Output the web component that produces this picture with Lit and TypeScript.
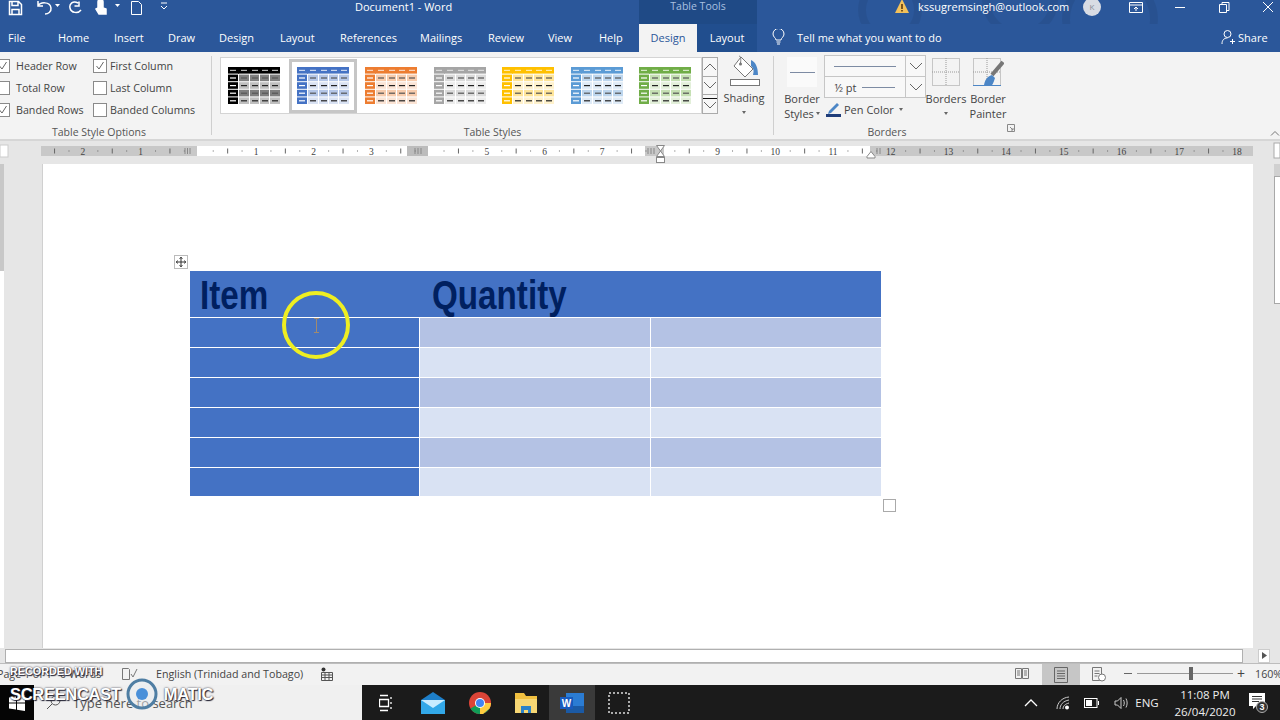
import { LitElement, html, css, svg, unsafeCSS } from "lit";
import { customElement } from "lit/decorators.js";

const FONT = unsafeCSS(`"Open Sans", "Noto Sans", sans-serif`);

const TABS: [string, number][] = [
  ["File", 8], ["Home", 58], ["Insert", 114], ["Draw", 168], ["Design", 219], ["Layout", 280],
  ["References", 340], ["Mailings", 420], ["Review", 488], ["View", 548], ["Help", 599],
];
const TABS_END = 639;

const STYLES = [
  ["#000000", "#7f7f7f", "#bfbfbf", "#b0b0b0"],
  ["#4472c4", "#b4c6e7", "#d9e2f3", "#c9d6ef"],
  ["#ed7d31", "#f7cbac", "#fbe4d5", "#f8d3ba"],
  ["#a5a5a5", "#dbdbdb", "#ededed", "#d8d8d8"],
  ["#ffc000", "#ffe599", "#fff2cc", "#ffe9a8"],
  ["#5b9bd5", "#bdd6ee", "#deeaf6", "#cfe2f3"],
  ["#70ad47", "#c5e0b3", "#e2efd9", "#d4e8c6"],
];

function thumb(c: string[]) {
  const rows = [0, 1, 2, 3, 4];
  const cols = [0, 1, 2, 3, 4];
  const xs = [0, 11, 22, 32, 42];
  const ws = [10, 10, 9, 9, 10];
  return html`<svg class="thumb" width="52" height="38" viewBox="0 0 52 38">
    ${rows.map((r) =>
      cols.map((k) => {
        const y = r * 7.6;
        const isHead = r === 0;
        const isFirst = k === 0;
        const fill = isHead || isFirst ? c[0] : r % 2 === 1 ? c[1] : c[2];
        const dash = isHead ? c[3] : isFirst ? "#ffffff" : r % 2 === 1 ? "#555" : "#222";
        return svg`<rect x=${isHead ? (k === 0 ? 0 : xs[k] - 1) : xs[k]} y=${y} width=${isHead ? ws[k] + 1 : ws[k]} height="6.6" fill=${fill}></rect>
          <rect x=${xs[k] + 2} y=${y + 2.8} width="6" height="1.2" fill=${dash}></rect>`;
      })
    )}
  </svg>`;
}

function ruler() {
  const zero = 198.3;
  const step = 57.7;
  const marks = [];
  for (let i = -3; i <= 18; i++) {
    const x = zero + step * i;
    if (i !== 0 && i !== 4 && i !== 8 && i >= -2) {
      marks.push(svg`<text x=${x} y="154.5" text-anchor="middle" font-size="9.5" fill="#444">${Math.abs(i)}</text>`);
    }
    for (const [f, h] of [[0.25, 1], [0.5, 5], [0.75, 1]] as [number, number][]) {
      const tx = x + step * f;
      if (tx > 42 && tx < 1250) {
        marks.push(svg`<rect x=${tx} y=${151 - h / 2} width="1" height=${h} fill="#666"></rect>`);
      }
    }
  }
  return html`<svg class="ruler" width="1280" height="23" viewBox="0 141 1280 23">
    <rect x="0" y="145" width="8" height="12" fill="#fff" stroke="#ccc"></rect>
    <rect x="1274" y="143" width="6" height="15" fill="#fff" stroke="#aaa"></rect>
    <rect x="41" y="146" width="1212" height="10" fill="#c8c8c8"></rect>
    <rect x="197" y="146" width="210" height="10" fill="#fff"></rect>
    <rect x="428" y="146" width="217" height="10" fill="#fff"></rect>
    <rect x="664" y="146" width="206" height="10" fill="#fff"></rect>
    <rect x="407" y="146" width="21" height="10" fill="#bcbcbc"></rect>
    <rect x="645" y="146" width="19" height="10" fill="#c8c8c8"></rect>
    ${marks}
    <g stroke="#888" stroke-width="1" fill="none">
      <path d="M185 148v6M187.500 148v6M190 148v6M415 148v6M418 148v6M421 148v6M648 148v6M651 148v6M654 148v6"></path>
      <path d="M656.500 145.500h8l-4 5.500 4 5.500h-8l4-5.500z" fill="#fff"></path>
      <rect x="656.500" y="157.500" width="8" height="5" fill="#fff"></rect>
      <path d="M867 156.500l4-5 4 5v1.500h-8z" fill="#fff"></path>
      <path d="M877 148v6M880 148v6"></path>
    </g>
  </svg>`;
}

@customElement("app-root")
export class AppRoot extends LitElement {
  static styles = css`
    :host { display: block; width: 1280px; height: 720px; overflow: hidden; font-family: ${FONT}; }
    svg { display: block; flex: none; }
    .app { position: relative; width: 1280px; height: 720px; display: flex; flex-direction: column; overflow: hidden; background: #e6e6e6; }

    .title { position: relative; height: 24px; padding-bottom: 12px; box-sizing: border-box; background: #2b579a; color: #fff; display: flex; align-items: center; font-size: 11px; flex: none; }
    .art { position: absolute; left: 820px; top: 0; }
    .qat { width: 355px; align-self: flex-start; margin-top: -2px; flex: none; }
    .doc-name { width: 284px; flex: none; }
    .ctx { width: 118px; height: 24px; margin-bottom: -12px; padding-bottom: 12px; box-sizing: border-box; background: #1f4a86; color: #a9c0e0; display: flex; align-items: center; justify-content: center; flex: none; font-size: 10.500px; }
    .account { margin-left: 144px; display: flex; align-items: center; flex: none; position: relative; }
    .warn { margin-left: -7px; }
    .email { margin-left: 8px; width: 152px; white-space: nowrap; font-size: 11px; }
    .avatar { width: 18px; height: 18px; border-radius: 50%; background: #d8dce4; color: #8a8f98; font-size: 8px; display: flex; align-items: center; justify-content: center; margin-left: 13px; margin-top: 1px; flex: none; }
    .winbtns { align-self: flex-start; flex: none; }

    .tabs { height: 28px; background: #2b579a; color: #fff; display: flex; font-size: 11px; flex: none; position: relative; }
    .tabs-left { width: 639px; box-sizing: border-box; padding: 0 0 2px 8px; display: flex; align-items: center; flex: none; }
    .tab { white-space: nowrap; flex: none; }
    .tab-active { width: 58px; padding-bottom: 2px; box-sizing: border-box; background: #f3f3f3; color: #2b579a; display: flex; align-items: center; justify-content: center; flex: none; }
    .tab-ctx { width: 60px; padding-bottom: 2px; box-sizing: border-box; background: #214e8e; display: flex; align-items: center; justify-content: center; flex: none; }
    .tell { display: flex; align-items: center; margin-left: 15px; padding-bottom: 2px; width: 449px; flex: none; }
    .tell span { margin-left: 12px; white-space: nowrap; }
    .share { display: flex; align-items: center; gap: 3px; padding-bottom: 2px; }

    .ribbon { position: relative; height: 87px; background: #f3f3f3; display: flex; flex: none; color: #444; font-size: 11px; border-bottom: 2px solid #d6d6d6; }
    .group { display: flex; flex-direction: column; flex: none; border-right: 1px solid #cfcfcf; margin-top: 4px; height: 79px; }
    .group-body { height: 71px; margin-top: -1px; display: flex; flex: none; }
    .group-label { text-align: center; font-size: 10.500px; line-height: 14px; color: #555; margin-top: -1px; }
    .g-opts { width: 211px; }
    .g-opts .group-label { width: 198px; }
    .checks { display: grid; grid-template-columns: 93px 110px; grid-auto-rows: 22px; }
    .check { display: flex; align-items: center; gap: 3px; white-space: nowrap; font-size: 10.700px; }
    .check:nth-child(odd) { margin-left: -4px; gap: 6px; }
    .box { width: 12px; height: 12px; border: 1px solid #8a8a8a; background: #fff; flex: none; display: flex; align-items: center; justify-content: center; }

    .g-styles { width: 561px; }
    .g-styles .group-body { padding-left: 8px; }
    .gallery { width: 482px; height: 57px; margin-top: 2px; background: #fff; border: 1px solid #d4d4d4; display: flex; align-items: center; padding-left: 7px; gap: 16.500px; flex: none; box-sizing: border-box; }
    .gal-item { display: flex; align-items: center; justify-content: center; flex: none; width: 52px; height: 38px; }
    .gal-sel { outline: 3px solid #c6c6c6; outline-offset: 5px; }
    .scroller { width: 16px; height: 57px; margin-top: 2px; display: flex; flex-direction: column; border: 1px solid #aaa; box-sizing: border-box; background: #f7f7f7; flex: none; }
    .scroller div { flex: 1; display: flex; align-items: center; justify-content: center; border-bottom: 1px solid #aaa; }
    .scroller .more { border-bottom: 0; flex-direction: column; }
    .big { display: flex; flex-direction: column; align-items: center; flex: none; font-size: 11px; line-height: 15px; text-align: center; }
    .shading { width: 46px; margin-left: 3px; }
    .big .cap { margin-top: 3px; }
    .big .cap-b { margin-top: 4px; }
    .caret { width: 0; height: 0; border-left: 2.500px solid transparent; border-right: 2.500px solid transparent; border-top: 3px solid #666; display: inline-block; vertical-align: middle; margin-left: 2px; }
    .caret.solo { margin-left: 0; }
    .caret-line { height: 15px; display: flex; align-items: center; justify-content: center; }

    .g-borders { width: 238px; border-right: 0; position: relative; }
    .g-borders .group-label { width: 226px; }
    .g-borders .group-body { padding-left: 9px; }
    .bstyle { width: 38px; }
    .bstyle-box { width: 30px; height: 30px; background: #fafafa; display: flex; align-items: center; justify-content: center; margin-top: 2px; }
    .bstyle-box i { display: block; width: 25px; height: 1px; background: #7d8ba3; }
    .lines { width: 102px; margin-left: 3px; flex: none; }
    .ldrop { display: flex; flex-direction: column; border: 1px solid #c6c6c6; background: #f8f8f8; height: 43px; box-sizing: border-box; }
    .lrow { flex: 1; display: flex; align-items: center; }
    .lrow + .lrow { border-top: 1px solid #c6c6c6; }
    .lrow-main { flex: none; width: 80px; display: flex; align-items: center; justify-content: center; gap: 6px; font-size: 11px; border-right: 1px solid #c6c6c6; height: 100%; }
    .lrow-main i { display: block; height: 1px; background: #7d8ba3; }
    .lrow-main .long { width: 62px; }
    .lrow-main .short { width: 33px; }
    .lrow-arrow { flex: 1; display: flex; align-items: center; justify-content: center; }
    .pen { display: flex; align-items: center; margin-top: 2px; margin-left: 2px; gap: 3px; font-size: 11px; }
    .bbtn { width: 40px; padding-top: 2px; }
    .bbtn + .bbtn { margin-left: 2px; }
    .launcher { position: absolute; right: -3px; bottom: 3px; }
    .collapse { position: absolute; left: 1270px; top: 78px; }

    .ruler-row { height: 23px; flex: none; background: #e6e6e6; }
    .ruler text { font-family: "Liberation Serif", serif; }

    .doc { height: 484px; display: flex; flex: none; background: #e6e6e6; }
    .vruler { width: 4px; flex: none; background: linear-gradient(#c8c8c8 0, #c8c8c8 107px, #fff 107px); }
    .gutter-l { width: 38px; flex: none; border-right: 1px solid #d0d0d0; }
    .page { width: 1210px; flex: none; background: #fff; padding: 107px 0 0 147px; box-sizing: border-box; position: relative; }
    .gutter-r { width: 21px; flex: none; }
    .vscroll { width: 6px; flex: none; display: flex; flex-direction: column; }
    .vscroll-top { height: 12px; background: #d0d0d0; flex: none; }
    .vscroll-thumb { height: 128px; background: #fff; border: 1px solid #a8a8a8; border-right: 0; box-sizing: border-box; flex: none; }

    .tbl-wrap { position: relative; width: 691px; }
    .tbl { display: grid; grid-template-columns: 229px 230px 230px; grid-template-rows: 46px repeat(5, 29px) 28px; gap: 1px; background: #fff; }
    .th { grid-column: 1 / 4; background: #4472c4; position: relative; display: grid; grid-template-columns: 230px 1fr; align-items: center; }
    .th span { font-family: "Liberation Sans", Arial, sans-serif; font-weight: 700; font-size: 40px; color: #002060; display: block; transform: scaleX(0.83); transform-origin: left center; white-space: nowrap; line-height: 48px; }
    .th span:first-child { margin-left: 10px; }
    .th span:last-child { margin-left: 12px; }
    .c0 { background: #4472c4; }
    .c1 { background: #b4c2e4; }
    .c2 { background: #d9e2f3; }
    .move { position: absolute; left: -16px; top: -16px; width: 14px; height: 14px; border: 1px solid #bbb; background: #fff; box-sizing: border-box; display: flex; align-items: center; justify-content: center; }
    .resize { position: absolute; left: 693px; top: 228px; width: 13px; height: 13px; border: 1px solid #aaa; background: #fff; box-sizing: border-box; }
    .cursor-ring { position: absolute; left: 92px; top: 20px; width: 68px; height: 68px; border: 4px solid #eeee22; border-radius: 50%; box-sizing: border-box; display: flex; align-items: center; justify-content: center; }

    .hscroll { height: 15px; flex: none; display: flex; align-items: center; background: #e6e6e6; }
    .hthumb { width: 1238px; height: 14px; margin-left: 5px; background: #fff; border: 1px solid #b0b0b0; box-sizing: border-box; flex: none; }
    .hbtn { width: 12px; height: 14px; margin-left: 15px; background: #fff; border: 1px solid #ccc; box-sizing: border-box; display: flex; align-items: center; justify-content: center; flex: none; }

    .status { height: 22px; padding-bottom: 2px; flex: none; background: #f2f2f2; border-top: 1px solid #bdbdbd; box-sizing: border-box; display: flex; align-items: center; font-size: 10.700px; color: #444; position: relative; }
    .st-words { width: 125px; margin-left: -3px; white-space: nowrap; flex: none; }
    .st-lang { margin-left: 18px; width: 150px; white-space: nowrap; flex: none; }
    .st-macro { margin-left: 14px; }
    .st-read { margin-left: 681px; }
    .st-view { width: 38px; height: 21px; margin-bottom: -2px; display: flex; align-items: center; justify-content: center; flex: none; }
    .st-view.on { background: #c6c6c6; margin-left: 13px; }
    .minus { margin-left: 6px; width: 8px; height: 1px; background: #666; flex: none; }
    .slider { width: 96px; height: 1px; background: #999; position: relative; margin: 0 4px 0 5px; flex: none; }
    .slider b { position: absolute; left: 52px; top: -6px; width: 4px; height: 13px; background: #666; }
    .plus { font-size: 14px; line-height: 14px; flex: none; }
    .zoom { margin-left: 10px; white-space: nowrap; flex: none; }

    .taskbar { height: 35px; flex: none; background: #1b1b1b; display: flex; align-items: center; color: #fff; }
    .start { width: 34px; height: 35px; background: #050505; display: flex; align-items: center; justify-content: center; flex: none; }
    .search { width: 328px; height: 35px; background: #f0f0f0; color: #555; display: flex; align-items: center; font-size: 13px; padding-left: 12px; box-sizing: border-box; gap: 12px; flex: none; white-space: nowrap; }
    .tb { height: 35px; width: 46px; display: flex; align-items: center; justify-content: center; flex: none; }
    .tb.w47 { width: 47px; }
    .tb.w48 { width: 48px; }
    .tb.on { background: #3a3a3a; }
    .tray { display: flex; align-items: center; font-size: 11.500px; color: #eee; margin-left: 381px; }
    .tray .wifi { margin-left: 18px; }
    .tray .batt { margin-left: 14px; }
    .tray .spk { margin-left: 15px; }
    .eng { margin-left: 3px; width: 30px; text-align: center; }
    .clock { width: 76px; margin-left: 5px; text-align: center; font-size: 11.500px; line-height: 17px; }
    .notif { margin-left: 6px; }

    .wm { position: absolute; left: 10px; top: 664px; color: #fff; font-family: "Liberation Sans", Arial, sans-serif; font-weight: 700; text-shadow: 0 0 2px #223, 1px 1px 1px #223; display: flex; flex-direction: column; }
    .wm-top { font-size: 10.800px; line-height: 15px; white-space: nowrap; }
    .wm-row { display: flex; align-items: center; font-size: 16.500px; letter-spacing: -0.3px; height: 30px; }
    .wm-logo { margin: 0 6px 0 5px; }
  `;

  render() {
    const chev = (d: "u" | "d") => html`<svg width="14" height="9" viewBox="0 0 14 9"><path d=${d === "u" ? "M1 8l6-6 6 6" : "M1 1l6 6 6-6"} fill="none" stroke="#666"></path></svg>`;
    return html`<div class="app">
      <div class="title">
        <svg class="art" width="400" height="52" viewBox="0 0 400 52" fill="none" stroke="#000" stroke-opacity=".06" stroke-width="8"><circle cx="70" cy="10" r="28"></circle><circle cx="290" cy="20" r="44"></circle><circle cx="200" cy="0" r="34"></circle></svg>
        <div class="qat">
          <svg width="355" height="26" viewBox="0 0 355 26" fill="none" stroke="#fff" stroke-width="1.500">
            <path d="M9.500 3.500h9l3 3v10h-12z M12 3.500v4h6v-4 M12 16.500v-5h7v5"></path>
            <path d="M38 3v5h5 M38 8c2-4 12-5 13 2 .5 4-3 6-6 6"></path>
            <path d="M55 6l2.500 3 2.500-3z" fill="#fff" stroke="none"></path>
            <path d="M79 3.500v4.500h-4.500 M78 5c-5-3-9 1-8 5 1 5 8 6 11 2"></path>
            <path d="M98 4a2.500 2.500 0 1 1 5 0v6l3 1v5h-7l-3-5 2-1z" fill="#fff"></path>
            <path d="M115 6l2.500 3 2.500-3z" fill="#fff" stroke="none"></path>
            <path d="M131.500 3.500h7l3 3v10h-10z" stroke-width="1"></path>
            <path d="M161 5h6 M161 8l3 3 3-3" stroke-width="1"></path>
          </svg>
        </div>
        <div class="doc-name">Document1 - Word</div>
        <div class="ctx">Table Tools</div>
        <div class="account">
          <svg class="warn" width="16" height="16" viewBox="0 0 16 16"><path d="M8 1l7 14H1z" fill="#f3c15a"></path><path d="M7.200 6h1.600v5H7.200zM7.200 12h1.600v1.500H7.200z" fill="#5a3a10"></path></svg>
          <span class="email">kssugremsingh@outlook.com</span>
          <span class="avatar">K</span>
        </div>
        <svg class="winbtns" width="179" height="24" viewBox="1101 0 179 24" fill="none" stroke="#fff">
          <path d="M1129.500 2.500h13v10h-13z M1129.500 5h13 M1136 11V7M1134 9l2-2 2 2"></path>
          <path d="M1175 7.500h10"></path>
          <path d="M1219.500 4.500h7v8h-7z M1222 4.500v-2h7v8h-2.500"></path>
          <path d="M1263 2l10 10M1273 2l-10 10"></path>
        </svg>
      </div>
      <div class="tabs">
        <div class="tabs-left">
          ${TABS.map((t, i) => html`<span class="tab" style="width:${(i + 1 < TABS.length ? TABS[i + 1][1] : TABS_END) - t[1]}px">${t[0]}</span>`)}
        </div>
        <div class="tab-active">Design</div>
        <div class="tab-ctx">Layout</div>
        <div class="tell">
          <svg width="13" height="16" viewBox="0 0 13 16" fill="none" stroke="#fff"><path d="M4 11c0-2-3-3-3-6a5.500 5.500 0 0 1 11 0c0 3-3 4-3 6z M4.500 13h4 M5 15h3"></path></svg>
          <span>Tell me what you want to do</span>
        </div>
        <div class="share">
          <svg width="14" height="16" viewBox="0 0 14 16" fill="none" stroke="#fff"><circle cx="6.500" cy="5" r="3.500"></circle><path d="M1 15c0-4 2-6 5.500-6 M9 12.500h5 M11.500 10v5"></path></svg>
          <span>Share</span>
        </div>
      </div>
      <div class="ribbon">
        <div class="group g-opts">
          <div class="group-body">
            <div class="checks">
              ${[["Header Row", 1], ["First Column", 1], ["Total Row", 0], ["Last Column", 0], ["Banded Rows", 1], ["Banded Columns", 0]].map(
                (c) => html`<label class="check"><span class="box">${c[1] ? html`<svg width="10" height="10" viewBox="0 0 10 10"><path d="M1.500 5l2.500 3 4.500-7" fill="none" stroke="#666"></path></svg>` : ""}</span>${c[0]}</label>`
              )}
            </div>
          </div>
          <div class="group-label">Table Style Options</div>
        </div>
        <div class="group g-styles">
          <div class="group-body">
            <div class="gallery">
              ${STYLES.map((s, i) => html`<div class="gal-item ${i === 1 ? "gal-sel" : ""}">${thumb(s)}</div>`)}
            </div>
            <div class="scroller">
              <div>${chev("u")}</div>
              <div>${chev("d")}</div>
              <div class="more"><svg width="14" height="14" viewBox="0 0 14 14"><path d="M0 1.500h14" stroke="#111"></path><path d="M1 5l6 6 6-6" fill="none" stroke="#666"></path></svg></div>
            </div>
            <div class="big shading">
              <svg width="34" height="32" viewBox="0 0 34 32" fill="none" stroke="#777">
                <path d="M14 2l12 12-8 8-11-11z" fill="#fff"></path>
                <path d="M12 1c2 0 2 4 1.500 7"></path>
                <circle cx="13.500" cy="9" r="1.500" fill="#777" stroke="none"></circle>
                <path d="M24 5c5 2 7 8 7 15h-5c1-4 1-6-2-9z" fill="#4c86c6" stroke="none"></path>
                <rect x="3.500" y="24.500" width="29" height="6" fill="#fff"></rect>
              </svg>
              <div class="cap">Shading</div>
              <div class="caret-line"><span class="caret solo"></span></div>
            </div>
          </div>
          <div class="group-label">Table Styles</div>
        </div>
        <div class="group g-borders">
          <div class="group-body">
            <div class="big bstyle">
              <div class="bstyle-box"><i></i></div>
              <div class="cap-b">Border</div>
              <div class="caret-line">Styles<span class="caret"></span></div>
            </div>
            <div class="lines">
              <div class="ldrop">
                <div class="lrow"><div class="lrow-main"><i class="long"></i></div><div class="lrow-arrow">${chev("d")}</div></div>
                <div class="lrow"><div class="lrow-main">½ pt <i class="short"></i></div><div class="lrow-arrow">${chev("d")}</div></div>
              </div>
              <div class="pen">
                <svg width="15" height="18" viewBox="0 0 15 18"><path d="M3 11l8-8 2 2-8 8-3 1z" fill="#4c86c6"></path><path d="M0 14h15v3H0z" fill="#1f3d7a"></path></svg>
                <span>Pen Color</span><span class="caret"></span>
              </div>
            </div>
            <div class="big bbtn">
              <svg width="30" height="30" viewBox="0 0 30 30" fill="none" stroke="#999" stroke-dasharray="1 1"><rect x="1.500" y="1.500" width="27" height="27"></rect><path d="M15 1v28M1 15h28"></path></svg>
              <div class="cap-b">Borders</div>
              <div class="caret-line"><span class="caret solo"></span></div>
            </div>
            <div class="big bbtn">
              <svg width="32" height="30" viewBox="0 0 32 30" fill="none" stroke="#999"><g stroke-dasharray="1 1"><rect x="1.500" y="1.500" width="27" height="27"></rect><path d="M15 1v28M1 15h28"></path></g><path d="M31 5L20 18" stroke="#777" stroke-width="4"></path><path d="M12 28c1-6 4-9 8-10l3 3c-1 3-2 6-3 7z" fill="#4c86c6" stroke="none"></path><path d="M1 28.500h28" stroke="#4c86c6"></path></svg>
              <div class="cap-b">Border</div>
              <div class="caret-line">Painter</div>
            </div>
          </div>
          <div class="group-label">Borders</div>
          <svg class="launcher" width="8" height="8" viewBox="0 0 8 8" fill="none" stroke="#888"><path d="M.5 7.500v-7h7v7z M3 3l3 3 M6 4v2H4"></path></svg>
        </div>
        <svg class="collapse" width="10" height="6" viewBox="0 0 10 6"><path d="M1 5.500l4-4 4 4" fill="none" stroke="#777"></path></svg>
      </div>
      <div class="ruler-row">${ruler()}</div>
      <div class="doc">
        <div class="vruler"></div>
        <div class="gutter-l"></div>
        <div class="page">
          <div class="tbl-wrap">
            <div class="tbl">
              <div class="th"><span>Item</span><span>Quantity</span></div>
              ${[1, 2, 1, 2, 1, 2].map((b) => html`<div class="c0"></div><div class="c${b}"></div><div class="c${b}"></div>`)}
            </div>
            <div class="move"><svg width="10" height="10" viewBox="0 0 10 10" fill="none" stroke="#333"><path d="M5 0v10M0 5h10M3.500 1.500L5 .5l1.500 1M3.500 8.500L5 9.500l1.500-1M1.500 3.500L.5 5l1 1.500M8.500 3.500L9.500 5l-1 1.500"></path></svg></div>
            <div class="resize"></div>
            <div class="cursor-ring"><svg width="7" height="15" viewBox="0 0 7 15" fill="none" stroke="#a08a70"><path d="M1 .5h5M3.500 .5v14M1 14.500h5"></path></svg></div>
          </div>
        </div>
        <div class="gutter-r"></div>
        <div class="vscroll"><div class="vscroll-top"></div><div class="vscroll-thumb"></div></div>
      </div>
      <div class="hscroll">
        <div class="hthumb"></div>
        <div class="hbtn"><svg width="5" height="7" viewBox="0 0 5 7"><path d="M0 0l5 3.500-5 3.500z" fill="#555"></path></svg></div>
      </div>
      <div class="status">
        <span class="st-words">Page 1 of 1 &nbsp; 0 Words</span>
        <svg width="16" height="14" viewBox="0 0 16 14" fill="none" stroke="#777"><path d="M.5 1.500h6l1 1v10h-7z M9 7l2 3 4-8"></path></svg>
        <span class="st-lang">English (Trinidad and Tobago)</span>
        <svg class="st-macro" width="14" height="14" viewBox="0 0 14 14" fill="none" stroke="#555"><path d="M1.500 5.500h11v8h-11z M1.500 8h11M1.500 10.500h11M5 5.500v8M9 5.500v8"></path><circle cx="3.500" cy="2.500" r="2" fill="#333" stroke="none"></circle></svg>
        <svg class="st-read" width="14" height="13" viewBox="0 0 14 13" fill="none" stroke="#777"><path d="M.5 1.500h6v10h-6z M7.500 1.500h6v10h-6z M2 4h3M2 6h3M2 8h3M9 4h3M9 6h3M9 8h3"></path></svg>
        <div class="st-view on"><svg width="14" height="16" viewBox="0 0 14 16" fill="none" stroke="#666"><path d="M.5 .5h13v15H.5z M3 4h8M3 6.500h8M3 9h8M3 11.500h8"></path></svg></div>
        <div class="st-view"><svg width="14" height="15" viewBox="0 0 14 15" fill="none" stroke="#777"><path d="M.5 .5h9v13H.5z M2.500 4h5M2.500 6.500h5M2.500 9h3"></path><circle cx="10" cy="10.500" r="3.500" fill="#fff"></circle></svg></div>
        <span class="minus"></span>
        <div class="slider"><b></b></div>
        <span class="plus">+</span>
        <span class="zoom">160%</span>
      </div>
      <div class="taskbar">
        <div class="start"><svg width="16" height="16" viewBox="0 0 16 16" fill="#fff"><path d="M0 2.500l7-1v6H0zM8 1.300l8-1.300v7.500H8zM0 8.500h7v6l-7-1zM8 8.500h8V16l-8-1.300z"></path></svg></div>
        <div class="search">
          <svg width="15" height="15" viewBox="0 0 15 15" fill="none" stroke="#555"><circle cx="9.500" cy="5.500" r="4.500"></circle><path d="M6 9l-5 5"></path></svg>
          <span>Type here to search</span>
        </div>
        <div class="tb w47"><svg width="14" height="18" viewBox="0 0 14 18" fill="none" stroke="#fff"><path d="M1 1.500h8M1 16.500h8M.5 5.500h9v7h-9z M12 3v2M12 8v2M12 13v2" stroke-width="1.300"></path></svg></div>
        <div class="tb w48"><svg width="24" height="22" viewBox="0 0 24 22"><path d="M0 8L12 0l12 8v14H0z" fill="#1e7fc9"></path><path d="M0 8h24v14H0z" fill="#32a8e8"></path><path d="M0 8l12 8 12-8" fill="#c8ecff"></path></svg></div>
        <div class="tb"><svg width="22" height="22" viewBox="0 0 22 22"><circle cx="11" cy="11" r="11" fill="#db4437"></circle><path d="M11 11L1.500 16.500A11 11 0 0 0 11 22z M11 11l9.500 5.500A11 11 0 0 1 11 22z" fill="#0f9d58"></path><path d="M11 11h11a11 11 0 0 1-1.500 5.500L14 22H11z" fill="#ffcd40"></path><circle cx="11" cy="11" r="5" fill="#fff"></circle><circle cx="11" cy="11" r="4" fill="#4285f4"></circle></svg></div>
        <div class="tb"><svg width="22" height="20" viewBox="0 0 22 20"><path d="M0 0h9l2 3h11v17H0z" fill="#f0c040"></path><path d="M0 6h22v14H0z" fill="#f7d774"></path><path d="M6 13h10v7h-3v-3h-4v3H6z" fill="#2b82c9"></path></svg></div>
        <div class="tb on"><svg width="24" height="20" viewBox="0 0 24 20"><path d="M6 0h18v20H6z" fill="#2b7cd3"></path><path d="M6 13h18v7H6z" fill="#1b5aa5"></path><rect x="0" y="4" width="13" height="12" fill="#185abd"></rect><text x="6.500" y="13.500" text-anchor="middle" font-size="10" font-weight="700" fill="#fff" font-family="Liberation Sans">W</text></svg></div>
        <div class="tb w48"><svg width="22" height="22" viewBox="0 0 22 22"><rect x="1" y="1" width="20" height="20" fill="none" stroke="#ddd" stroke-width="1.500" stroke-dasharray="2 2"></rect></svg></div>
        <div class="tray">
          <svg width="14" height="8" viewBox="0 0 14 8" fill="none" stroke="#fff" stroke-width="1.300"><path d="M1 7l6-6 6 6"></path></svg>
          <svg class="wifi" width="14" height="14" viewBox="0 0 14 14" fill="none" stroke="#ccc"><path d="M1 13C1 7 6 1.500 13 1M4 13c0-4 3-8 9-9M7 13c0-3 2-5 6-6"></path><circle cx="11" cy="11.500" r="2" fill="#fff" stroke="none"></circle></svg>
          <svg class="batt" width="15" height="10" viewBox="0 0 15 10" fill="none" stroke="#fff"><rect x=".5" y=".5" width="12.500" height="9"></rect><rect x="2" y="2" width="6" height="6" fill="#fff" stroke="none"></rect><path d="M14.500 3v4"></path></svg>
          <svg class="spk" width="15" height="14" viewBox="0 0 15 14" fill="none" stroke="#ccc"><path d="M1 5h2.500L7 1.500v11L3.500 9H1z M9.500 4c1 2 1 4 0 6 M12 2.500c1.500 3 1.500 6 0 9"></path></svg>
          <span class="eng">ENG</span>
          <div class="clock">11:08 PM<br />26/04/2020</div>
          <svg class="notif" width="20" height="20" viewBox="0 0 20 20"><path d="M0 0h16v13H7l-3 3v-3H0z" fill="#fff"></path><path d="M3 3.500h10M3 6h10M3 8.500h7" stroke="#333"></path><circle cx="13" cy="14" r="5.500" fill="#333" stroke="#aaa"></circle><text x="13" y="17" text-anchor="middle" font-size="9" fill="#fff" font-family="Liberation Sans" font-weight="700">3</text></svg>
        </div>
      </div>
      <div class="wm">
        <div class="wm-top">RECORDED WITH</div>
        <div class="wm-row">
          <span>SCREENCAST</span>
          <svg class="wm-logo" width="32" height="32" viewBox="0 0 32 32"><circle cx="16" cy="16" r="14" fill="#e8ecf0" fill-opacity=".5" stroke="#4f7ea3" stroke-width="3"></circle><circle cx="16" cy="16" r="6" fill="#4a90d9"></circle></svg>
          <span>MATIC</span>
        </div>
      </div>
    </div>`;
  }
}
